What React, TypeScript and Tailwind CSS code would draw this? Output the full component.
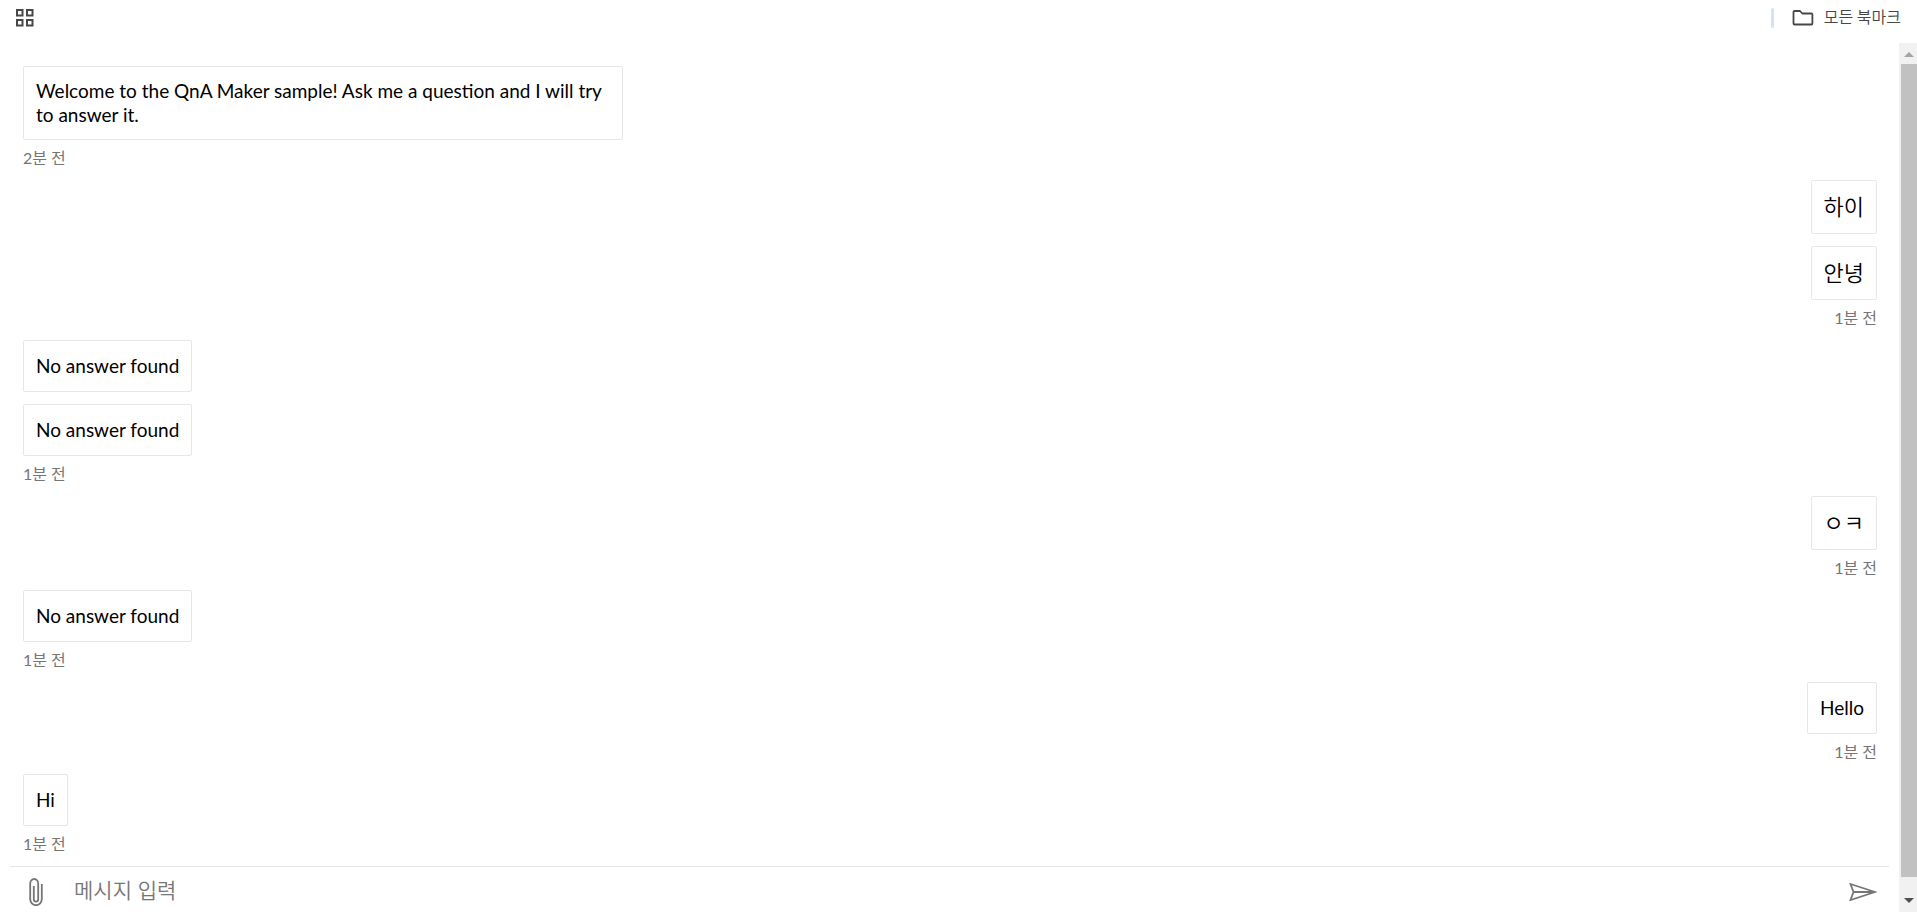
import { useState } from "react";
import clsx from "clsx";

type Message = {
  text: string;
  korean?: boolean;
};

type Group = {
  from: "bot" | "user";
  messages: Message[];
  time: string;
};

const groups: Group[] = [
  {
    from: "bot",
    messages: [
      {
        text: "Welcome to the QnA Maker sample! Ask me a question and I will try to answer it.",
      },
    ],
    time: "2분 전",
  },
  {
    from: "user",
    messages: [
      { text: "하이", korean: true },
      { text: "안녕", korean: true },
    ],
    time: "1분 전",
  },
  {
    from: "bot",
    messages: [{ text: "No answer found" }, { text: "No answer found" }],
    time: "1분 전",
  },
  { from: "user", messages: [{ text: "ㅇㅋ", korean: true }], time: "1분 전" },
  { from: "bot", messages: [{ text: "No answer found" }], time: "1분 전" },
  { from: "user", messages: [{ text: "Hello" }], time: "1분 전" },
  { from: "bot", messages: [{ text: "Hi" }], time: "1분 전" },
];

function BookmarkBar() {
  return (
    <header className="flex h-[43px] items-start justify-between px-4 font-['Noto_Sans_CJK_KR',sans-serif]">
      <button aria-label="Apps" className="mt-2">
        <svg width="18" height="19" viewBox="0 0 18 19" fill="none" stroke="#474747" strokeWidth="2">
          <rect x="1" y="2" width="5.5" height="5.5" />
          <rect x="11" y="2" width="5.5" height="5.5" />
          <rect x="1" y="12" width="5.5" height="5.5" />
          <rect x="11" y="12" width="5.5" height="5.5" />
        </svg>
      </button>
      <div className="mt-2 flex h-5 items-center">
        <div className="mr-[18px] h-5 w-[3px] rounded-full bg-[#d3e3fd]" />
        <button className="flex items-center gap-2.5 pb-1 text-base font-[350] leading-5 text-[#474747]">
          <svg className="mt-1" width="22" height="16" viewBox="0 0 22 16" fill="none" stroke="#474747" strokeWidth="1.8" strokeLinejoin="round">
            <path d="M2.6 1H8l2.3 2.5h9c.6 0 1.1.5 1.1 1.1v8.8c0 .6-.5 1.1-1.1 1.1H2.6c-.6 0-1.1-.5-1.1-1.1V2.1C1.5 1.5 2 1 2.6 1z" />
          </svg>
          모든 북마크
        </button>
      </div>
    </header>
  );
}

function Bubble({ message }: { message: Message }) {
  return (
    <div
      className={clsx(
        "flex max-w-[600px] items-center rounded-xs border border-[#e6e6e6] bg-white px-3 py-3 leading-6 text-black",
        message.korean
          ? "min-h-[54px] text-[22px] font-[350]"
          : "min-h-[52px] text-[19px]"
      )}
    >
      {message.text}
    </div>
  );
}

function MessageGroup({ group }: { group: Group }) {
  return (
    <li
      className={clsx(
        "flex flex-col",
        group.from === "user" ? "items-end" : "items-start"
      )}
    >
      <div
        className={clsx(
          "flex flex-col gap-3",
          group.from === "user" ? "items-end" : "items-start"
        )}
      >
        {group.messages.map((message, i) => (
          <Bubble key={i} message={message} />
        ))}
      </div>
      <time className="mt-1 h-6 text-base leading-7 text-[#767676]">
        {group.time}
      </time>
    </li>
  );
}

function SendBox() {
  const [value, setValue] = useState("");

  return (
    <form
      onSubmit={(e) => {
        e.preventDefault();
        setValue("");
      }}
      className="mx-2.5 flex h-[46px] items-center border-t border-[#e6e6e6] pt-1"
    >
      <button type="button" aria-label="Upload file" className="flex w-[52px] justify-center">
        <svg width="14" height="28" viewBox="0 0 14 28" fill="none" stroke="#767676" strokeWidth="1.8">
          <path d="M12.8 6v15a5.8 6.2 0 0 1-11.6 0V5.5a4 4.5 0 0 1 8 0V21a2.2 2.6 0 0 1-4.4 0V8" />
        </svg>
      </button>
      <input
        type="text"
        aria-label="메시지 입력"
        placeholder="메시지 입력"
        value={value}
        onChange={(e) => setValue(e.target.value)}
        className="min-w-0 flex-1 px-3 pb-1 text-[21px] font-[350] leading-8 outline-none placeholder:text-[#767676]"
      />
      <button type="submit" aria-label="Send" className="flex w-[52px] justify-center">
        <svg width="28" height="18" viewBox="0 0 28 18" fill="none" stroke="#767676" strokeWidth="1.8">
          <path d="M1.5 1 26 9 1.5 17 4.5 9zM4.5 9H26" />
        </svg>
      </button>
    </form>
  );
}

function ScrollBar() {
  return (
    <div className="flex w-[18px] flex-col bg-[#f1f1f1] pl-0.5">
      <div className="flex h-[21px] items-center justify-center pt-0.5">
        <svg width="10" height="5" viewBox="0 0 10 5" fill="#a3a3a3">
          <path d="M5 0 10 5H0z" />
        </svg>
      </div>
      <div className="flex-1 bg-[#c1c1c1]" />
      <div className="flex h-[35px] items-center justify-center pt-3">
        <svg width="10" height="5" viewBox="0 0 10 5" fill="#505050">
          <path d="M0 0H10L5 5z" />
        </svg>
      </div>
    </div>
  );
}

export default function App() {
  return (
    <div className="flex min-h-screen flex-col bg-white">
      <BookmarkBar />
      <div className="flex flex-1 font-[Lato,'Noto_Sans_CJK_KR',sans-serif]">
        <main className="flex min-w-0 flex-1 flex-col">
          <ul className="flex flex-1 flex-col gap-3 pb-3 pl-[23px] pr-[22px] pt-[23px]">
            {groups.map((group, i) => (
              <MessageGroup key={i} group={group} />
            ))}
          </ul>
          <SendBox />
        </main>
        <ScrollBar />
      </div>
    </div>
  );
}
